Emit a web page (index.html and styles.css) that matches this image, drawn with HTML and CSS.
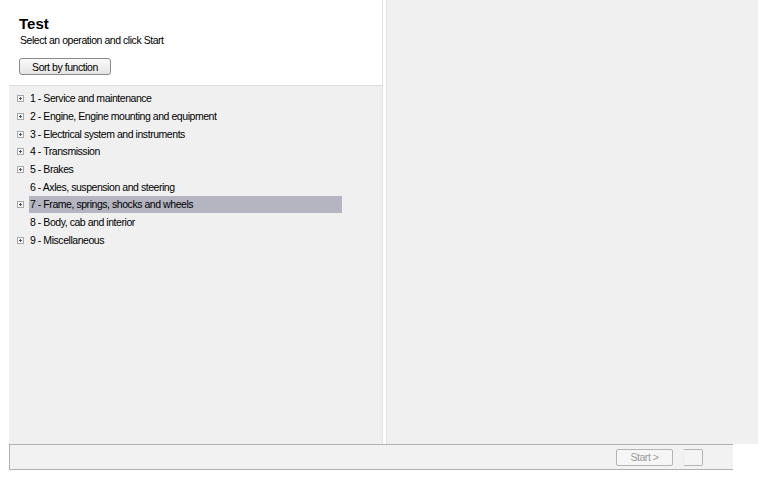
FILE: index.html
```html
<!DOCTYPE html>
<html lang="en">
<head>
    <meta charset="UTF-8">
    <title>Test</title>
    <link rel="stylesheet" href="styles.css">
</head>
<body>

    <div class="main">
        <div class="left">
            <div class="header">
                <h1>Test</h1>
                <p class="hint">Select an operation and click Start</p>
                <button class="sort-btn">Sort by function</button>
            </div>

            <div class="tree">
                <div class="row"><span class="plus"></span><span class="label">1 - Service and maintenance</span></div>
                <div class="row"><span class="plus"></span><span class="label">2 - Engine, Engine mounting and equipment</span></div>
                <div class="row"><span class="plus"></span><span class="label">3 - Electrical system and instruments</span></div>
                <div class="row"><span class="plus"></span><span class="label">4 - Transmission</span></div>
                <div class="row"><span class="plus"></span><span class="label">5 - Brakes</span></div>
                <div class="row"><span class="noplus"></span><span class="label">6 - Axles, suspension and steering</span></div>
                <div class="row"><span class="plus"></span><span class="label selected">7 - Frame, springs, shocks and wheels</span></div>
                <div class="row"><span class="noplus"></span><span class="label">8 - Body, cab and interior</span></div>
                <div class="row"><span class="plus"></span><span class="label">9 - Miscellaneous</span></div>
            </div>
        </div>

        <div class="divider"></div>

        <div class="right"></div>
    </div>

    <div class="footer">
        <button class="start-btn" disabled>Start &gt;</button>
        <span class="blank-btn"></span>
    </div>

</body>
</html>
```

FILE: styles.css
```css
body {
    margin: 0;
    background-color: #ffffff;
    font-family: "Liberation Sans", Arial, sans-serif;
    font-size: 10.5px;
    letter-spacing: -0.45px;
    color: #000;
}

.main {
    display: flex;
    height: 444px;
}

.left {
    width: 382px;
    display: flex;
    flex-direction: column;
}

.header {
    height: 85px;
    padding-left: 19px;
    box-sizing: border-box;
    padding-top: 15px;
}

.header h1 {
    margin: 0;
    font-size: 15px;
    font-weight: bold;
    letter-spacing: 0;
    line-height: 17px;
}

.hint {
    margin: 2px 0 0 1px;
    line-height: 13px;
}

.sort-btn {
    margin-top: 11px;
    width: 92px;
    height: 17px;
    padding: 0;
    font-family: inherit;
    font-size: 10.5px;
    letter-spacing: -0.45px;
    color: #000;
    border: 1px solid #8a8a8a;
    border-radius: 3px;
    background: linear-gradient(#fbfbfb, #e4e4e4);
}

.tree {
    flex: 1;
    margin-left: 9px;
    background-color: #f0f0f0;
    border-top: 1px solid #dcdcdc;
    padding-top: 4px;
}

.row {
    display: flex;
    align-items: center;
    height: 17.7px;
}

.plus, .noplus {
    width: 7px;
    height: 7px;
    margin-left: 8px;
    margin-right: 5px;
    flex-shrink: 0;
}

.plus {
    border: 1px solid #a8a8a8;
    box-sizing: border-box;
    background:
        linear-gradient(#555, #555) center / 3px 1px no-repeat,
        linear-gradient(#555, #555) center / 1px 3px no-repeat,
        #f8f8f8;
}

.label {
    width: 313px;
    height: 17px;
    line-height: 17px;
    padding-left: 1px;
    box-sizing: border-box;
}

.selected {
    background-color: #b4b5c1;
}

.divider {
    width: 5px;
    box-sizing: border-box;
    border-left: 1px solid #e2e2e8;
    border-right: 1px solid #e2e2ee;
    background-color: #ffffff;
}

.right {
    width: 371px;
    background-color: #f0f0f0;
}

.footer {
    margin-left: 9px;
    width: 724px;
    height: 26px;
    box-sizing: border-box;
    border-top: 1px solid #b0b0b0;
    border-bottom: 1px solid #b0b0b0;
    border-left: 1px solid #b0b0b0;
    background-color: #f2f2f2;
    display: flex;
    align-items: center;
    justify-content: flex-end;
    padding-right: 30px;
}

.start-btn {
    width: 57px;
    height: 17px;
    padding: 0;
    font-family: inherit;
    font-size: 10.5px;
    letter-spacing: -0.45px;
    color: #9a9a9a;
    border: 1px solid #b4b4b4;
    border-radius: 2px;
    background-color: #f6f6f6;
}

.blank-btn {
    width: 20px;
    height: 17px;
    margin-left: 10px;
    box-sizing: border-box;
    border: 1px solid #b4b4b4;
    border-left-color: #ececec;
    border-radius: 2px;
    background-color: #f4f4f4;
}
```
